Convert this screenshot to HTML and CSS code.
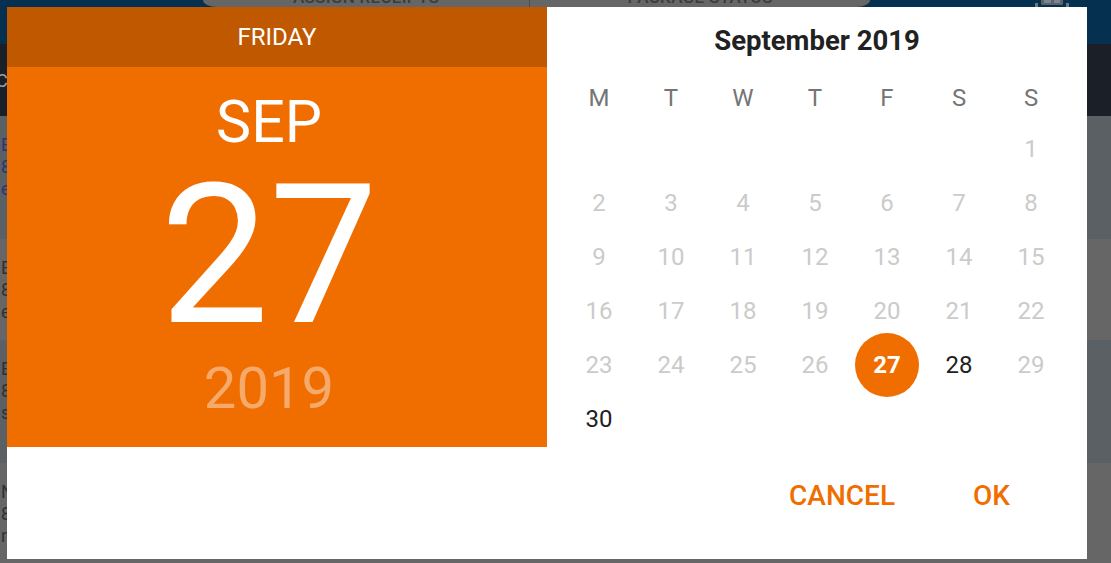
FILE: index.html
```html
<!DOCTYPE html>
<html lang="en">
<head>
<meta charset="utf-8">
<title>Date picker</title>
<link rel="stylesheet" href="styles.css">
</head>
<body>
<div class="app">
  <div class="topbar">
    <div class="tabs">
      <div class="tab tab-first"><span>ASSIGN RECEIPTS</span></div>
      <div class="tab"><span>PACKAGE STATUS</span></div>
    </div>
    <svg class="top-icon" width="34" height="7" viewBox="0 0 34 7">
      <rect x="0" y="3" width="3" height="4" fill="#6f7680"/>
      <rect x="6" y="-2" width="22" height="7" rx="1.5" fill="#5a626d"/>
      <rect x="9" y="0" width="7" height="3" fill="#7d848d"/>
      <rect x="19" y="0" width="6" height="3" fill="#7d848d"/>
      <rect x="31" y="3" width="3" height="4" fill="#6f7680"/>
    </svg>
  </div>
  <div class="toolbar"><span class="tb-text">C</span></div>
  <div class="list">
    <div class="row row-dark row-link"><span>E</span><span>8</span><span>e</span></div>
    <div class="row row-grey row-short"><span>E</span><span>8</span><span>e</span></div>
    <div class="row row-dark"><span>E</span><span>8</span><span>s</span></div>
    <div class="row row-grey"><span>N</span><span>8</span><span>n</span></div>
  </div>
</div>

<div class="dialog">
  <div class="date-header">
    <div class="weekday">FRIDAY</div>
    <div class="date-body">
      <div class="month">SEP</div>
      <div class="day">27</div>
      <div class="year">2019</div>
    </div>
  </div>

  <div class="calendar">
    <div class="cal-title">September 2019</div>
    <div class="weekdays">
      <span>M</span><span>T</span><span>W</span><span>T</span><span>F</span><span>S</span><span>S</span>
    </div>
    <div class="days">
      <span></span><span></span><span></span><span></span><span></span><span></span><span class="off">1</span>
      <span class="off">2</span><span class="off">3</span><span class="off">4</span><span class="off">5</span><span class="off">6</span><span class="off">7</span><span class="off">8</span>
      <span class="off">9</span><span class="off">10</span><span class="off">11</span><span class="off">12</span><span class="off">13</span><span class="off">14</span><span class="off">15</span>
      <span class="off">16</span><span class="off">17</span><span class="off">18</span><span class="off">19</span><span class="off">20</span><span class="off">21</span><span class="off">22</span>
      <span class="off">23</span><span class="off">24</span><span class="off">25</span><span class="off">26</span><span><b class="selected">27</b></span><span class="on">28</span><span class="off">29</span>
      <span class="on">30</span>
    </div>
  </div>

  <div class="actions">
    <button class="btn">CANCEL</button>
    <button class="btn">OK</button>
  </div>
</div>
</body>
</html>
```
FILE: styles.css
```css
* { box-sizing: border-box; }

html, body {
  margin: 0;
  padding: 0;
  width: 1111px;
  height: 563px;
  overflow: hidden;
  background: #666666;
  font-family: Roboto, "Noto Sans", "Liberation Sans", sans-serif;
}

/* ---- background app (dimmed) ---- */
.app {
  width: 1111px;
  height: 563px;
  display: flex;
  flex-direction: column;
}

.topbar {
  height: 44px;
  background: #06304f;
  display: flex;
  align-items: flex-start;
}

.tabs {
  margin-left: 203px;
  width: 667px;
  height: 7px;
  background: #666666;
  border-radius: 0 0 14px 14px / 0 0 7px 7px;
  display: flex;
}

.tab {
  flex: 1;
  height: 7px;
  display: flex;
  justify-content: center;
  align-items: flex-end;
  padding-bottom: 3px;
  font-size: 17px;
  font-weight: 500;
  line-height: 14px;
  color: #3b3b3b;
  letter-spacing: 0.3px;
}

.tab-first {
  flex: 0 0 327px;
  border-right: 1px solid #4c4c4c;
}

.top-icon {
  margin-left: 165px;
  display: block;
}

.toolbar {
  height: 72px;
  background: #1b1f27;
  display: flex;
  align-items: center;
}

.tb-text {
  font-size: 18px;
  color: #9ea2a8;
  margin-left: -4px;
}

.list {
  flex: 1;
  display: flex;
  flex-direction: column;
}

.row {
  height: 123px;
  display: flex;
  flex-direction: column;
  padding: 18px 0 0 1px;
  font-size: 18px;
  line-height: 22px;
  color: #2e3133;
}

.row-short { height: 100px; }
.row-dark { background: #5b6064; }
.row-grey { background: #666666; flex: 1; }
.row-link { color: #2b3570; }

/* ---- dialog ---- */
.dialog {
  position: fixed;
  top: 7px;
  left: 7px;
  width: 1080px;
  height: 552px;
  background: #ffffff;
  display: grid;
  grid-template-columns: 540px 540px;
  grid-template-rows: 440px 112px;
}

.date-header {
  grid-column: 1;
  grid-row: 1;
  display: flex;
  flex-direction: column;
}

.weekday {
  height: 60px;
  background: #c05800;
  color: #ffffff;
  font-size: 24px;
  line-height: 60px;
  text-align: center;
}

.date-body {
  flex: 1;
  background: #f06e00;
  display: flex;
  flex-direction: column;
  align-items: center;
  padding: 25px 16px 0 0;
  color: #ffffff;
}

.month {
  font-size: 59px;
  line-height: 60px;
}

.day {
  font-size: 194px;
  line-height: 194px;
  margin-top: 7px;
}

.year {
  font-size: 58px;
  line-height: 60px;
  margin-top: 5px;
  color: #f5a96b;
}

.calendar {
  grid-column: 2;
  grid-row: 1;
  display: flex;
  flex-direction: column;
}

.cal-title {
  height: 67px;
  line-height: 67px;
  text-align: center;
  font-size: 27.5px;
  font-weight: 700;
  color: #212121;
}

.weekdays,
.days {
  display: grid;
  grid-template-columns: repeat(7, 72px);
  margin: 0 20px 0 16px;
}

.weekdays span {
  height: 48px;
  display: flex;
  align-items: center;
  justify-content: center;
  font-size: 24px;
  color: #757575;
}

.days span {
  height: 54px;
  display: flex;
  align-items: center;
  justify-content: center;
  font-size: 24px;
}

.days .off { color: #cbcbcb; }
.days .on { color: #212121; }

.selected {
  width: 64px;
  height: 64px;
  border-radius: 50%;
  background: #f06e00;
  color: #ffffff;
  font-weight: 700;
  display: flex;
  align-items: center;
  justify-content: center;
  flex: none;
}

.actions {
  grid-column: 1 / -1;
  grid-row: 2;
  display: flex;
  justify-content: flex-end;
  align-items: center;
  gap: 78px;
  padding: 0 77px 14px 0;
}

.btn {
  background: none;
  border: 0;
  padding: 0;
  margin: 0;
  font-family: Roboto, "Noto Sans", "Liberation Sans", sans-serif;
  font-size: 28px;
  font-weight: 500;
  line-height: 30px;
  color: #f06e00;
  cursor: pointer;
}
```
